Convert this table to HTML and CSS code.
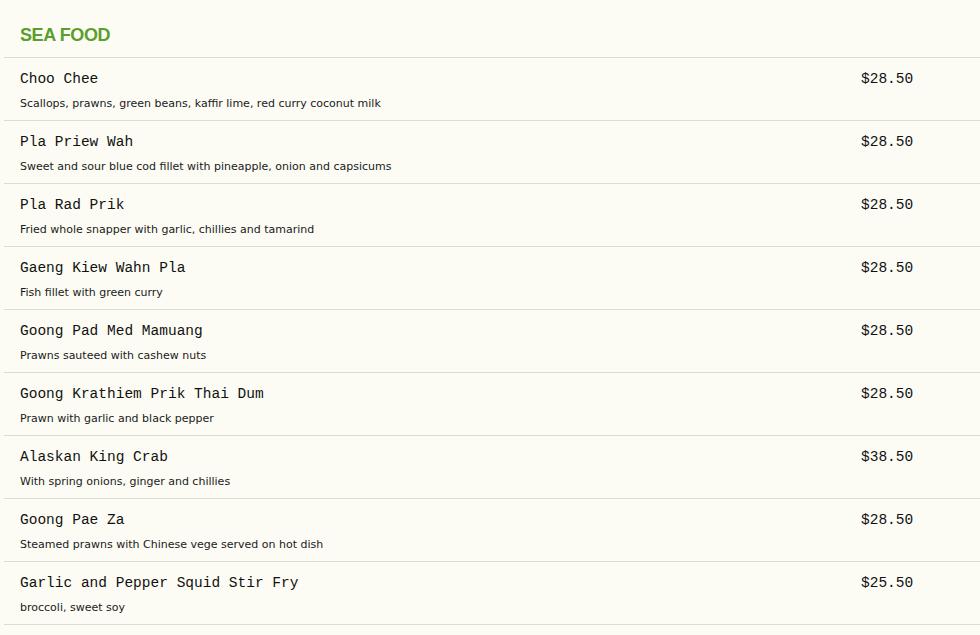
FILE: index.html
```html
<!DOCTYPE html>
<html lang="en">
<head>
    <meta charset="UTF-8">
    <meta name="viewport" content="width=device-width, initial-scale=1.0">
    <title>Sea Food Menu</title>
    <link rel="stylesheet" href="styles.css">
</head>
<body>

    <!-- Sea food section -->
    <div class="menu-section">
        <h2 class="section-title">SEA FOOD</h2>

        <div class="menu-item">
            <div class="item-info">
                <h3>Choo Chee</h3>
                <p>Scallops, prawns, green beans, kaffir lime, red curry coconut milk</p>
            </div>
            <span class="item-price">$28.50</span>
        </div>

        <div class="menu-item">
            <div class="item-info">
                <h3>Pla Priew Wah</h3>
                <p>Sweet and sour blue cod fillet with pineapple, onion and capsicums</p>
            </div>
            <span class="item-price">$28.50</span>
        </div>

        <div class="menu-item">
            <div class="item-info">
                <h3>Pla Rad Prik</h3>
                <p>Fried whole snapper with garlic, chillies and tamarind</p>
            </div>
            <span class="item-price">$28.50</span>
        </div>

        <div class="menu-item">
            <div class="item-info">
                <h3>Gaeng Kiew Wahn Pla</h3>
                <p>Fish fillet with green curry</p>
            </div>
            <span class="item-price">$28.50</span>
        </div>

        <div class="menu-item">
            <div class="item-info">
                <h3>Goong Pad Med Mamuang</h3>
                <p>Prawns sauteed with cashew nuts</p>
            </div>
            <span class="item-price">$28.50</span>
        </div>

        <div class="menu-item">
            <div class="item-info">
                <h3>Goong Krathiem Prik Thai Dum</h3>
                <p>Prawn with garlic and black pepper</p>
            </div>
            <span class="item-price">$28.50</span>
        </div>

        <div class="menu-item">
            <div class="item-info">
                <h3>Alaskan King Crab</h3>
                <p>With spring onions, ginger and chillies</p>
            </div>
            <span class="item-price">$38.50</span>
        </div>

        <div class="menu-item">
            <div class="item-info">
                <h3>Goong Pae Za</h3>
                <p>Steamed prawns with Chinese vege served on hot dish</p>
            </div>
            <span class="item-price">$28.50</span>
        </div>

        <div class="menu-item">
            <div class="item-info">
                <h3>Garlic and Pepper Squid Stir Fry</h3>
                <p>broccoli, sweet soy</p>
            </div>
            <span class="item-price">$25.50</span>
        </div>
    </div>

</body>
</html>
```

FILE: styles.css
```css
body {
    margin: 0;
    background-color: #fcfcf4;
    font-family: "DejaVu Sans", Verdana, sans-serif;
    color: #111;
}

.menu-section {
    margin-left: 4px;
}

.section-title {
    margin: 0;
    padding: 25px 16px 11px;
    font-family: "Liberation Sans", Arial, sans-serif;
    font-size: 18px;
    line-height: 21px;
    font-weight: bold;
    letter-spacing: -0.4px;
    color: #5a9e2c;
}

.menu-item {
    display: flex;
    border-top: 1px solid #dcdcd4;
    padding: 12px 0 8px 16px;
}

.menu-item:last-child {
    border-bottom: 1px solid #dcdcd4;
}

.item-info {
    flex: 1;
}

.item-info h3 {
    margin: 0;
    font-family: "Liberation Mono", "Courier New", monospace;
    font-size: 14.5px;
    line-height: 18px;
    font-weight: normal;
    color: #111;
}

.item-info p {
    margin: 7px 0 0;
    font-size: 11px;
    line-height: 17px;
    color: #1a1a1a;
}

.item-price {
    width: 119px;
    font-family: "Liberation Mono", "Courier New", monospace;
    font-size: 14.5px;
    line-height: 18px;
    color: #111;
}
```
